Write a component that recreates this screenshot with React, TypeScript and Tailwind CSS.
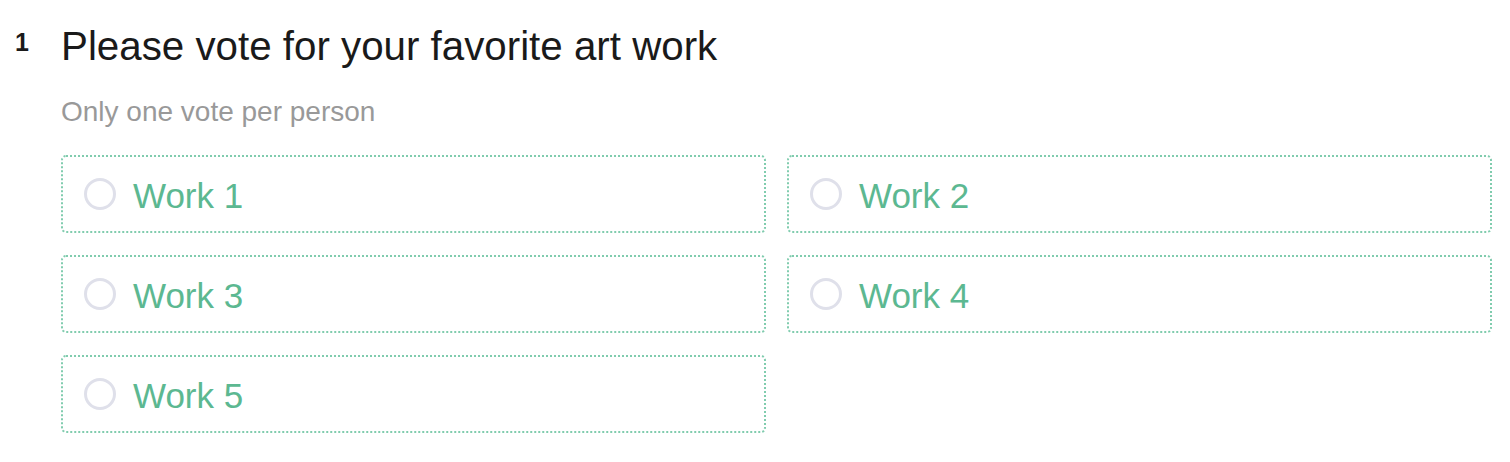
const options = ["Work 1", "Work 2", "Work 3", "Work 4", "Work 5"];

export default function App() {
  return (
    <div
      className="w-[1510px] h-[462px] bg-white flex items-start pl-[15px]"
      style={{ fontFamily: '"Liberation Sans", Arial, sans-serif' }}
    >
      {/* Question number */}
      <div className="w-[46px] pt-[30px] text-[25px] leading-[25px] font-bold text-[#1a1a1a]">
        1
      </div>

      <div className="pt-[23px]">
        <h1 className="text-[40.3px] leading-[48px] text-[#1a1a1a]">
          Please vote for your favorite art work
        </h1>
        <p className="mt-[25px] text-[28px] leading-[32px] text-[#999999]">
          Only one vote per person
        </p>

        {/* Options */}
        <div className="mt-[27px] grid grid-cols-[705px_705px] gap-x-[21px] gap-y-[22px]">
          {options.map((label) => (
            <label
              key={label}
              className="h-[78px] flex items-center pl-[21px] border-2 border-dotted border-[#80ccae] rounded-[5px] cursor-pointer"
            >
              <span className="w-[32px] h-[32px] rounded-full border-[3px] border-[#dfe0ea] shrink-0"></span>
              <span className="ml-[17px] mt-[3px] text-[35px] leading-[40px] text-[#5cb891]">
                {label}
              </span>
            </label>
          ))}
        </div>
      </div>
    </div>
  );
}
